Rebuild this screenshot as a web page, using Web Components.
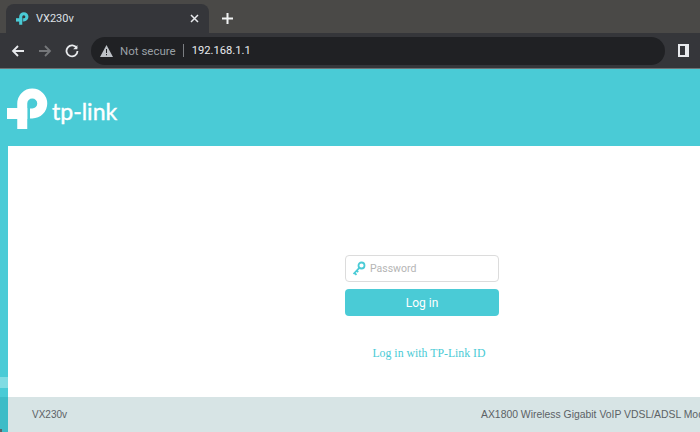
<!DOCTYPE html>
<html>
<head>
<meta charset="utf-8">
<style>
  html, body { margin: 0; height: 432px; overflow: hidden; background: #fff; }
  body { display: flex; flex-direction: column; font-family: "Liberation Sans", Arial, sans-serif; }
</style>
</head>
<body>
<browser-chrome title-text="VX230v" host="192.168.1.1"></browser-chrome>
<router-page model="VX230v" description="AX1800 Wireless Gigabit VoIP VDSL/ADSL Modem Router">
  <login-form></login-form>
</router-page>

<script>
// TP-Link mark: ring with stem, plus the crossbar
const TP_MARK = `<path d="M22.25 129V103.5A10 10 0 1 1 32.25 113.5H30" fill="none" stroke="currentColor" stroke-width="10"/><path d="M7 108h20.25v11H7z" fill="currentColor"/>`;

class BrowserChrome extends HTMLElement {
  constructor() {
    super();
    this.attachShadow({ mode: 'open' });
    this.shadowRoot.innerHTML = `
      <style>
        :host { display: block; flex: none; font-family: "Roboto", "Liberation Sans", sans-serif; color: #e8eaed; }
        .strip { height: 33px; background: #4a4947; display: flex; align-items: flex-end; padding-left: 6px; box-sizing: border-box; }
        .tab { width: 203px; height: 29px; background: #35363a; border-radius: 8px 8px 0 0; display: flex; align-items: center; padding: 0 10px; box-sizing: border-box; font-size: 11px; }
        .tab svg.fav { width: 13px; height: 13px; color: #4acbd6; margin-right: 7px; }
        .tab span { flex: 1; color: #dee1e6; }
        .plus { margin-left: 13px; margin-bottom: 9px; }
        .bar { height: 35px; background: #35363a; display: flex; align-items: center; padding: 0 11px; }
        .nav { width: 14px; height: 14px; fill: none; stroke: #e8eaed; stroke-width: 1.8; flex: none; }
        .nav.off { stroke: #75777a; }
        .nav + .nav { margin-left: 13px; }
        .omni { flex: none; width: 574px; height: 28px; margin: 0 13px 0 12px; background: #202124; border-radius: 14px; display: flex; align-items: center; padding-left: 9px; box-sizing: border-box; font-size: 11.5px; }
        .omni svg { width: 13px; height: 12px; margin-right: 7px; }
        .omni .warn { color: #9aa0a6; }
        .omni .sep { width: 1px; height: 13px; background: #7b7e82; margin: 0 8px 0 7px; }
        .omni .host { color: #e8eaed; font-size: 11.2px; }
        .side { width: 12px; height: 13px; box-sizing: border-box; background: #e8eaed; padding: 2px 4px 2px 2px; }
        .side i { display: block; height: 100%; background: #35363a; }
        .edge { height: 1px; background: #6d7376; }
      </style>
      <div class="strip">
        <div class="tab">
          <svg class="fav" viewBox="7 88 42 42">${TP_MARK}</svg>
          <span class="title"></span>
          <svg width="9" height="9" viewBox="0 0 9 9" fill="none" stroke="#e8eaed" stroke-width="1.5"><path d="M1 1l7 7M8 1l-7 7"/></svg>
        </div>
        <svg class="plus" width="11" height="11" viewBox="0 0 11 11" stroke="#f1f3f4" stroke-width="2"><path d="M5.5 0v11M0 5.5h11"/></svg>
      </div>
      <div class="bar">
        <svg class="nav" viewBox="0 0 14 14"><path d="M13 7H2M7 2L2 7l5 5"/></svg>
        <svg class="nav off" viewBox="0 0 14 14"><path d="M1 7h11M7 2l5 5-5 5"/></svg>
        <svg class="nav" viewBox="0 0 14 14"><path d="M11.8 4.2A5.5 5.5 0 1 0 12.5 7"/><path d="M12.4 1v4.2H8.2" fill="#e8eaed" stroke="none"/></svg>
        <div class="omni">
          <svg viewBox="0 0 13 12"><path d="M6.5 0L13 12H0z" fill="#bdc1c6"/><path d="M6 4h1v4H6zM6 9h1v1.2H6z" fill="#202124"/></svg>
          <span class="warn">Not secure</span><span class="sep"></span><span class="host"></span>
        </div>
        <div class="side"><i></i></div>
      </div>
      <div class="edge"></div>
    `;
  }

  connectedCallback() {
    this.shadowRoot.querySelector('.title').textContent = this.getAttribute('title-text');
    this.shadowRoot.querySelector('.host').textContent = this.getAttribute('host');
  }
}

class RouterPage extends HTMLElement {
  constructor() {
    super();
    this.attachShadow({ mode: 'open' });
    this.shadowRoot.innerHTML = `
      <style>
        :host { display: flex; flex-direction: column; flex: 1; min-height: 0; background: #4acbd6; }
        .head { height: 77px; flex: none; display: flex; align-items: flex-start; padding: 19px 0 0 7px; box-sizing: border-box; color: #fff; }
        .head svg { width: 42px; height: 42px; }
        .brand { font-family: "Lato", "Noto Sans", sans-serif; font-size: 23px; line-height: 30px; margin: 8px 0 0 3px; -webkit-text-stroke: 0.4px #fff; }
        .body { flex: 1; display: flex; min-height: 0; }
        .rail { width: 8px; flex: none; display: flex; flex-direction: column; }
        .rail .a { flex: 1; background: #4acbd6; }
        .rail .b { height: 11px; background: #80dce3; }
        .rail .c { height: 9px; background: #4acbd6; }
        .rail .d { height: 35px; background: linear-gradient(#5b6468, #5b6468) 0 100% / 2px 3px no-repeat, #3dbcc7; }
        .main { flex: 1; min-width: 0; display: flex; flex-direction: column; background: #fff; }
        .content { flex: 1; display: flex; justify-content: center; padding: 109px 0 0 136px; box-sizing: border-box; }
        .foot { height: 35px; flex: none; background: #d7e4e5; display: flex; align-items: center; justify-content: space-between; padding-left: 24px; font-size: 10.4px; color: #5c6265; white-space: nowrap; overflow: hidden; }
        .model { font-size: 10px; }
        .desc { flex: none; width: 219px; }
      </style>
      <div class="head">
        <svg viewBox="7 88 42 42">${TP_MARK}</svg>
        <span class="brand">tp-link</span>
      </div>
      <div class="body">
        <div class="rail"><div class="a"></div><div class="b"></div><div class="c"></div><div class="d"></div></div>
        <div class="main">
          <div class="content"><slot></slot></div>
          <div class="foot"><span class="model"></span><span class="desc"></span></div>
        </div>
      </div>
    `;
  }

  connectedCallback() {
    this.shadowRoot.querySelector('.model').textContent = this.getAttribute('model');
    this.shadowRoot.querySelector('.desc').textContent = this.getAttribute('description');
  }
}

class LoginForm extends HTMLElement {
  constructor() {
    super();
    this.attachShadow({ mode: 'open' });
    this.shadowRoot.innerHTML = `
      <style>
        :host { display: block; width: 154px; font-family: "Roboto", "Liberation Sans", sans-serif; }
        .field { height: 27px; box-sizing: border-box; border: 1px solid #dcdcdc; border-radius: 4px; display: flex; align-items: center; padding-left: 6px; font-size: 10.5px; color: #b5b5b5; }
        .field svg { width: 14px; height: 15px; margin-right: 4px; }
        .btn { height: 27px; margin-top: 7px; background: #4acbd6; border-radius: 4px; color: #fff; font-size: 12px; display: flex; align-items: center; justify-content: center; }
        .link { margin-top: 30px; text-align: center; padding-left: 14px; white-space: nowrap; font: 11.8px "Liberation Serif", serif; color: #4acbd6; }
      </style>
      <div class="field">
        <svg viewBox="0 0 14 15" fill="none" stroke="#4acbd6" stroke-width="1.8"><circle cx="9.5" cy="4.5" r="3" /><path d="M7.3 6.8L1.5 13M2.5 11.8l2 2M4.6 9.6l1.6 1.6"/></svg>
        Password
      </div>
      <div class="btn">Log in</div>
      <div class="link">Log in with TP-Link ID</div>
    `;
  }
}

customElements.define('browser-chrome', BrowserChrome);
customElements.define('router-page', RouterPage);
customElements.define('login-form', LoginForm);
</script>
</body>
</html>
